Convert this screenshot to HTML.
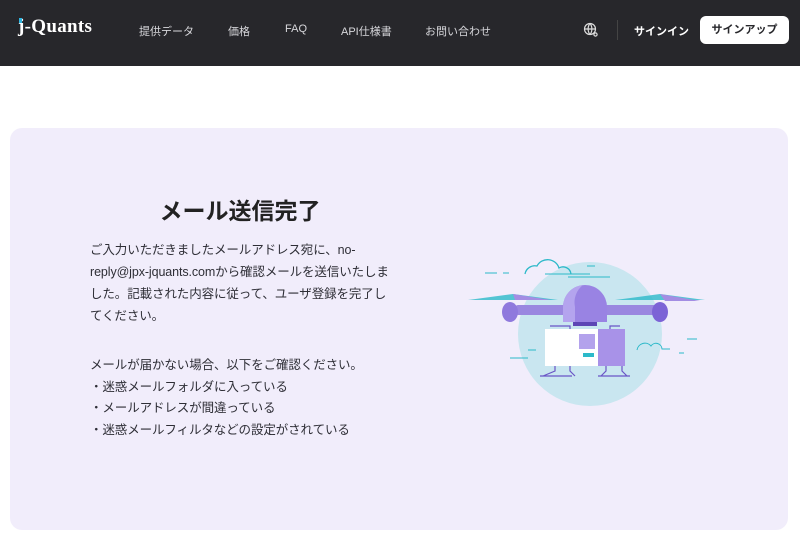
<!DOCTYPE html>
<html><head><meta charset="utf-8"><style>
*{margin:0;padding:0;box-sizing:border-box}
body{width:800px;height:537px;background:#fff;font-family:"Liberation Sans","Noto Sans CJK JP",sans-serif;overflow:hidden;position:relative;color:#2a2a33}
.hdr{position:absolute;left:0;top:0;width:800px;height:66px;background:#27272b}
.logo{position:absolute;left:18px;top:16px;color:#fff;font-family:"Liberation Serif","Noto Serif CJK SC",serif;font-weight:bold;font-size:19px;letter-spacing:0.3px}
.logo i{position:absolute;left:1px;top:2px;width:3px;height:5px;background:#2fb5e0}
.nav{position:absolute;top:23px;color:#d8d8dc;font-size:11px}
.si{position:absolute;left:634px;top:23px;color:#fff;font-size:11px;font-weight:bold}
.su{position:absolute;left:700px;top:16px;width:89px;height:28px;background:#fff;border-radius:6px;color:#27272b;font-size:11px;font-weight:bold;text-align:center;line-height:28px}
.sep{position:absolute;left:617px;top:20px;width:1px;height:20px;background:#444}
.panel{position:absolute;left:10px;top:128px;width:778px;height:402px;background:#f1edfb;border-radius:12px}
h1{position:absolute;left:90px;width:300px;top:192px;text-align:center;font-size:23px;font-weight:bold;color:#222}
.p{position:absolute;left:90px;font-size:12.5px;color:#2e2e36;letter-spacing:-0.1px}
</style></head><body>
<div class="hdr">
<div class="logo"><i></i>j-Quants</div>
<div class="nav" style="left:139px">提供データ</div>
<div class="nav" style="left:228px">価格</div>
<div class="nav" style="left:285px">FAQ</div>
<div class="nav" style="left:341px">API仕様書</div>
<div class="nav" style="left:425px">お問い合わせ</div>
<svg style="position:absolute;left:583px;top:22px" width="16" height="16" viewBox="0 0 16 16" fill="none" stroke="#ddd" stroke-width="1.2"><circle cx="7" cy="7" r="5.5"/><path d="M1.5 7h11M7 1.5c-2.5 3-2.5 8 0 11M7 1.5c2.5 3 2.5 8 0 11"/><circle cx="12.5" cy="12.5" r="1.6" fill="#27272b"/></svg>
<div class="sep"></div>
<div class="si">サインイン</div>
<div class="su">サインアップ</div>
</div>
<div class="panel"></div>
<h1>メール送信完了</h1>
<div class="p" style="top:239px;line-height:22px">ご入力いただきましたメールアドレス宛に、no-<br>reply@jpx-jquants.comから確認メールを送信いたしま<br>した。記載された内容に従って、ユーザ登録を完了し<br>てください。</div>
<div class="p" style="top:355px;line-height:21.6px">メールが届かない場合、以下をご確認ください。<br>・迷惑メールフォルダに入っている<br>・メールアドレスが間違っている<br>・迷惑メールフィルタなどの設定がされている</div>
<svg style="position:absolute;left:460px;top:240px" width="250" height="170" viewBox="0 0 250 170">
<circle cx="130" cy="94" r="72" fill="#c9e6f0"/>
<path d="M65 34a10 10 0 0 1 12-8a12 12 0 0 1 22 2a8 8 0 0 1 12 6" fill="none" stroke="#2cb9c9" stroke-width="1.3"/>
<path d="M85 34h45M25 33h12M43 33h6M108 37h42M127 26h8" stroke="#2cb9c9" stroke-width="1"/>
<path d="M177 110a8 8 0 0 1 14-4a6 6 0 0 1 11 3h8M227 99h10M219 113h5M50 118h18M68 110h8" fill="none" stroke="#2cb9c9" stroke-width="1"/>
<path d="M8 60l45-6l45 6z" fill="#2cb9c9" opacity=".8"/><path d="M53 54l38 6H55z" fill="#a38de3"/>
<path d="M155 60l45-6l45 6z" fill="#2cb9c9" opacity=".8"/><path d="M200 54l40 7h-35z" fill="#a38de3"/>
<rect x="55" y="65" width="150" height="10" rx="3" fill="#9a87e0"/>
<ellipse cx="50" cy="72" rx="8" ry="10" fill="#8f79dd"/>
<ellipse cx="200" cy="72" rx="8" ry="10" fill="#7c63d6"/>
<path d="M103 82V67a22 22 0 0 1 44 0v15z" fill="#9983e3"/><path d="M103 82V67a22 22 0 0 1 20-22a22 22 0 0 0-8 22v15z" fill="#b4a4ee"/>
<rect x="113" y="82" width="24" height="4" fill="#5d46b5"/>
<path d="M90 86h20v5M160 86h-10v5" stroke="#6a55c6" stroke-width="1.2" fill="none"/>
<rect x="138" y="89" width="27" height="37" fill="#a892e8"/>
<rect x="85" y="89" width="53" height="37" fill="#fff"/>
<rect x="119" y="94" width="16" height="15" fill="#b3a2ec"/>
<rect x="123" y="113" width="11" height="4" fill="#2cb9c9"/>
<path d="M95 126v5l-12 5M110 126v5l5 5M146 126v5l-5 5M162 126v5l5 5M80 136h32M138 136h32" stroke="#6a55c6" stroke-width="1.2" fill="none"/>
</svg>
</body></html>
